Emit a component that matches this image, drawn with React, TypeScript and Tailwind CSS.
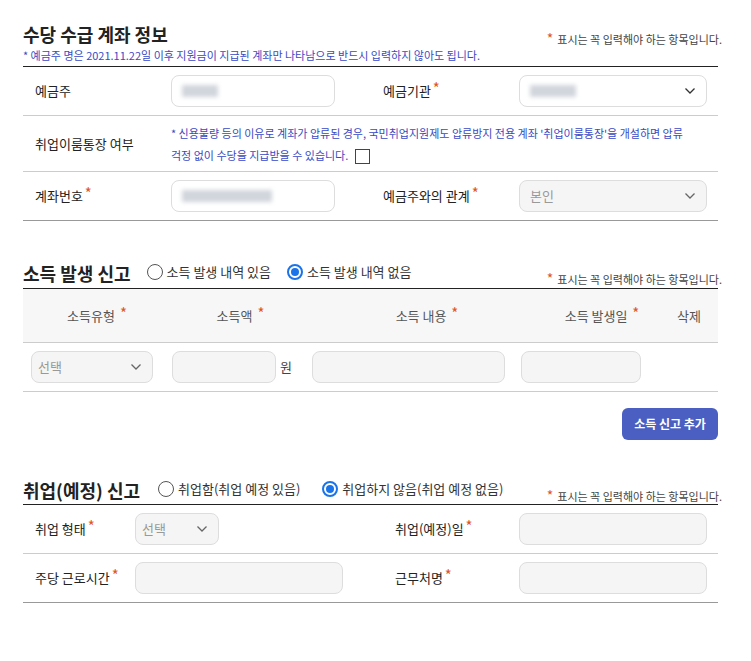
import React from "react";

const F = { fontFamily: '"Noto Sans CJK KR", "Noto Sans", sans-serif' };
const Star = () => <span className="text-[#e0561f] ml-0.5 text-[15px] leading-none relative top-[-2px]">*</span>;
const Chev = ({ c = "#333" }: { c?: string }) => (
  <svg width="12" height="8" viewBox="0 0 12 8"><path d="M1.5 1.5 6 6l4.5-4.5" fill="none" stroke={c} strokeWidth="1.3" /></svg>
);
const Blur = ({ w }: { w: number }) => (
  <div className="h-[12px] bg-gray-300 blur-[2px]" style={{ width: w }} />
);
const Req = () => (
  <div className="text-[11px] text-[#444] whitespace-nowrap leading-[16px]"><span className="text-[#e0561f] text-[14px] mr-1">*</span>표시는 꼭 입력해야 하는 항목입니다.</div>
);
const Radio = ({ on, label }: { on?: boolean; label: string }) => (
  <label className="flex items-center gap-1 text-[13px] text-[#333]">
    <span className={`w-[16px] h-[16px] rounded-full border flex items-center justify-center bg-white ${on ? "border-[#1a73e8] border-2" : "border-[#555]"}`}>
      {on && <span className="w-[8px] h-[8px] rounded-full bg-[#1a73e8]" />}
    </span>
    {label}
  </label>
);
const Box = ({ cls = "", gray, children }: { cls?: string; gray?: boolean; children?: React.ReactNode }) => (
  <div className={`h-[32px] rounded-lg border border-[#ddd] flex items-center px-2.5 shrink-0 ${gray ? "bg-[#f5f5f5]" : "bg-white"} ${cls}`}>{children}</div>
);

export default function App() {
  return (
    <div style={F} className="w-[751px] h-[661px] bg-white pl-[23px] pr-[33px] pt-[22px] text-[#222]">
      {/* section 1 */}
      <div className="flex justify-between items-start">
        <h2 className="text-[18px] font-semibold leading-[24px]">수당 수급 계좌 정보</h2>
        <div className="mt-[8px] mr-[-4px]"><Req /></div>
      </div>
      <p className="text-[11px] text-[#3949c4] leading-[16px]">* 예금주 명은 2021.11.22일 이후 지원금이 지급된 계좌만 나타남으로 반드시 입력하지 않아도 됩니다.</p>
      <div className="border-t-[1.5px] border-[#222] mt-[3px]">
        <div className="h-[49px] flex items-center border-b border-[#ccc] text-[13px]">
          <div className="w-[148px] pl-[12px]">예금주</div>
          <Box cls="w-[164px]"><Blur w={36} /></Box>
          <div className="w-[184px] pl-[48px]">예금기관<Star /></div>
          <Box cls="w-[188px] justify-between"><Blur w={46} /><Chev /></Box>
        </div>
        <div className="h-[56px] flex items-center border-b border-[#ccc] text-[13px]">
          <div className="w-[148px] pl-[12px] shrink-0">취업이룸통장 여부</div>
          <p className="text-[11px] text-[#3949c4] leading-[22px] flex-1">* 신용불량 등의 이유로 계좌가 압류된 경우, 국민취업지원제도 압류방지 전용 계좌 '취업이룸통장'을 개설하면 압류<br />걱정 없이 수당을 지급받을 수 있습니다. <span className="inline-block w-[15px] h-[15px] border border-[#444] bg-white align-middle ml-1" /></p>
        </div>
        <div className="h-[49px] flex items-center border-b border-[#999] text-[13px]">
          <div className="w-[148px] pl-[12px]">계좌번호<Star /></div>
          <Box cls="w-[164px]"><Blur w={90} /></Box>
          <div className="w-[184px] pl-[48px]">예금주와의 관계<Star /></div>
          <Box gray cls="w-[188px] justify-between text-[#999]">본인<Chev c="#666" /></Box>
        </div>
      </div>

      {/* section 2 */}
      <div className="flex items-start mt-[40px]">
        <h2 className="text-[18px] font-semibold leading-[24px]">소득 발생 신고</h2>
        <div className="flex gap-[16px] ml-[16px] mt-[1px]">
          <Radio label="소득 발생 내역 있음" />
          <Radio on label="소득 발생 내역 없음" />
        </div>
        <div className="ml-auto mt-[9px] mr-[-4px]"><Req /></div>
      </div>
      <div className="border-t-[1.5px] border-[#222] mt-[1px]">
        <div className="h-[54px] bg-[#f7f7f7] border-b border-[#ccc] grid grid-cols-[148px_139px_234px_116px_58px] items-center text-[13px] text-[#555] text-center">
          <div>소득유형 <Star /></div>
          <div>소득액 <Star /></div>
          <div>소득 내용 <Star /></div>
          <div>소득 발생일 <Star /></div>
          <div>삭제</div>
        </div>
        <div className="h-[49px] border-b border-[#ccc] flex items-center text-[13px]">
          <Box gray cls="ml-[8px] w-[122px] justify-between text-[#999] pl-1.5">선택<Chev c="#666" /></Box>
          <Box gray cls="ml-[19px] w-[104px]" />
          <span className="ml-[4px] text-[#444]">원</span>
          <Box gray cls="ml-[20px] w-[193px]" />
          <Box gray cls="ml-[16px] w-[120px]" />
        </div>
      </div>
      <div className="flex justify-end mt-[16px]">
        <button className="w-[96px] h-[32px] rounded-md bg-[#4a5fc1] text-white text-[12px] font-bold">소득 신고 추가</button>
      </div>

      {/* section 3 */}
      <div className="flex items-start mt-[38px]">
        <h2 className="text-[18px] font-semibold leading-[24px]">취업(예정) 신고</h2>
        <div className="flex gap-[22px] ml-[18px] mt-[1px]">
          <Radio label="취업함(취업 예정 있음)" />
          <Radio on label="취업하지 않음(취업 예정 없음)" />
        </div>
        <div className="ml-auto mt-[9px] mr-[-4px]"><Req /></div>
      </div>
      <div className="border-t-[1.5px] border-[#222] mt-[0px]">
        <div className="h-[49px] flex items-center border-b border-[#ccc] text-[13px]">
          <div className="w-[112px] pl-[12px]">취업 형태<Star /></div>
          <Box gray cls="w-[84px] justify-between text-[#999] pl-1.5">선택<Chev c="#666" /></Box>
          <div className="w-[300px] pl-[176px]">취업(예정)일<Star /></div>
          <Box gray cls="w-[188px]" />
        </div>
        <div className="h-[49px] flex items-center border-b border-[#999] text-[13px]">
          <div className="w-[112px] pl-[12px]">주당 근로시간<Star /></div>
          <Box gray cls="w-[208px]" />
          <div className="w-[176px] pl-[52px]">근무처명<Star /></div>
          <Box gray cls="w-[188px]" />
        </div>
      </div>
    </div>
  );
}
